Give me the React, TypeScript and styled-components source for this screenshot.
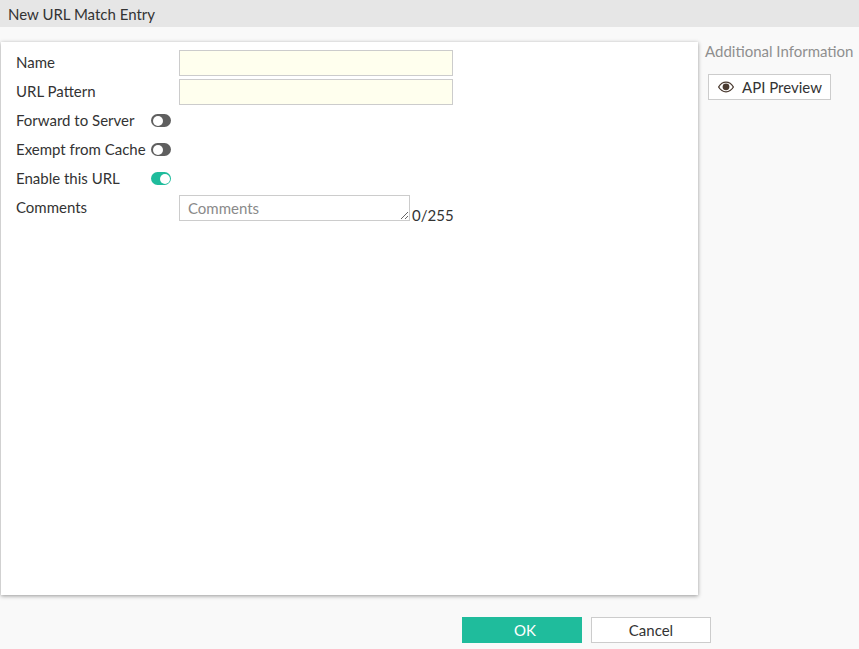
import React from 'react'
import styled, { createGlobalStyle } from 'styled-components'

const GlobalStyle = createGlobalStyle`
  html, body {
    margin: 0;
    padding: 0;
    background: #f9f9f9;
  }
  body {
    font-family: Lato, "Open Sans", sans-serif;
    font-size: 15px;
    color: #333;
  }
  * {
    box-sizing: border-box;
  }
`

const EyeIcon = () => (
  <EyeSvg width="16" height="12" viewBox="0 0 16 12">
    <path
      d="M0.6 6C2.4 3 5 1.2 8 1.2S13.6 3 15.4 6C13.6 9 11 10.8 8 10.8S2.4 9 0.6 6Z"
      fill="none"
      stroke="#4a3a30"
      strokeWidth="1.3"
    />
    <circle cx="8" cy="5.8" r="3.4" fill="#4a3a30" />
  </EyeSvg>
)

const App = () => {
  return (
    <Page>
      <GlobalStyle />
      <Header>New URL Match Entry</Header>
      <Body>
        <Panel>
          <Row>
            <Label>Name</Label>
            <TextInput />
          </Row>
          <Row>
            <Label>URL Pattern</Label>
            <TextInput />
          </Row>
          <Row>
            <Label>Forward to Server</Label>
            <Toggle />
          </Row>
          <Row>
            <Label>Exempt from Cache</Label>
            <Toggle />
          </Row>
          <Row>
            <Label>Enable this URL</Label>
            <Toggle on />
          </Row>
          <Row>
            <Label>Comments</Label>
            <CommentBox placeholder="Comments" />
            <Counter>0/255</Counter>
          </Row>
        </Panel>
        <Aside>
          <AsideTitle>Additional Information</AsideTitle>
          <PreviewButton>
            <EyeIcon />
            API Preview
          </PreviewButton>
        </Aside>
      </Body>
      <Footer>
        <OkButton>OK</OkButton>
        <CancelButton>Cancel</CancelButton>
      </Footer>
    </Page>
  )
}

export default App

const EyeSvg = styled.svg`
  flex: none;
`

const Page = styled.div`
  display: flex;
  flex-direction: column;
  width: 859px;
  height: 649px;
  overflow: hidden;
`

const Header = styled.div`
  height: 27px;
  padding: 0 8px;
  background: #e6e6e6;
  line-height: 29px;
  color: #333;
`

const Body = styled.div`
  display: flex;
  padding: 15px 0 0 1px;
  gap: 7px;
`

const Panel = styled.div`
  width: 697px;
  height: 553px;
  padding: 8px 15px;
  background: #fff;
  box-shadow: 0 1px 4px rgba(0, 0, 0, 0.4);
`

const Row = styled.div`
  display: flex;
  align-items: flex-start;
  min-height: 26px;
  margin-bottom: 3px;
`

const Label = styled.label`
  width: 135px;
  flex: none;
  line-height: 25px;
  white-space: nowrap;
`

const TextInput = styled.input`
  width: 274px;
  height: 26px;
  margin-left: 28px;
  padding: 0 8px;
  border: 1px solid #ccc;
  background: #ffffee;
  outline: none;
`

const Toggle = styled.span<{ on?: boolean }>`
  position: relative;
  width: 20px;
  height: 13px;
  margin-top: 6px;
  border-radius: 7px;
  background: ${({ on }) => (on ? '#1fbc9c' : '#5f5f5f')};

  &::after {
    content: '';
    position: absolute;
    top: 1.5px;
    left: ${({ on }) => (on ? '8.5px' : '1.5px')};
    width: 10px;
    height: 10px;
    border-radius: 50%;
    background: #fff;
  }
`

const CommentBox = styled.textarea`
  width: 231px;
  height: 26px;
  margin: 0 0 0 28px;
  padding: 3px 8px;
  border: 1px solid #ccc;
  background: #fff;
  font-family: Lato, sans-serif;
  font-size: 15px;
  color: #333;
  outline: none;

  &::placeholder {
    color: #8a8a8a;
    opacity: 1;
  }
`

const Counter = styled.span`
  margin: 10px 0 0 2px;
  line-height: 20px;
`

const Aside = styled.div`
  display: flex;
  flex-direction: column;
  align-items: flex-start;
`

const AsideTitle = styled.div`
  margin: -1px 0 0 0;
  line-height: 20px;
  color: #8f8f8f;
  white-space: nowrap;
`

const PreviewButton = styled.button`
  display: flex;
  align-items: center;
  gap: 8px;
  width: 123px;
  height: 26px;
  margin: 13px 0 0 3px;
  padding: 0 0 0 9px;
  border: 1px solid #ccc;
  background: #fff;
  font-family: Lato, sans-serif;
  font-size: 15px;
  color: #333;
  white-space: nowrap;
`

const Footer = styled.div`
  display: flex;
  justify-content: flex-end;
  gap: 9px;
  padding: 22px 148px 0 0;
`

const OkButton = styled.button`
  width: 120px;
  height: 26px;
  padding: 0 0 0 6px;
  border: none;
  background: #1fbc9c;
  font-family: Lato, sans-serif;
  font-size: 15px;
  color: #fff;
`

const CancelButton = styled.button`
  width: 120px;
  height: 26px;
  padding: 0;
  border: 1px solid #ccc;
  background: #fff;
  font-family: Lato, sans-serif;
  font-size: 15px;
  color: #333;
`
